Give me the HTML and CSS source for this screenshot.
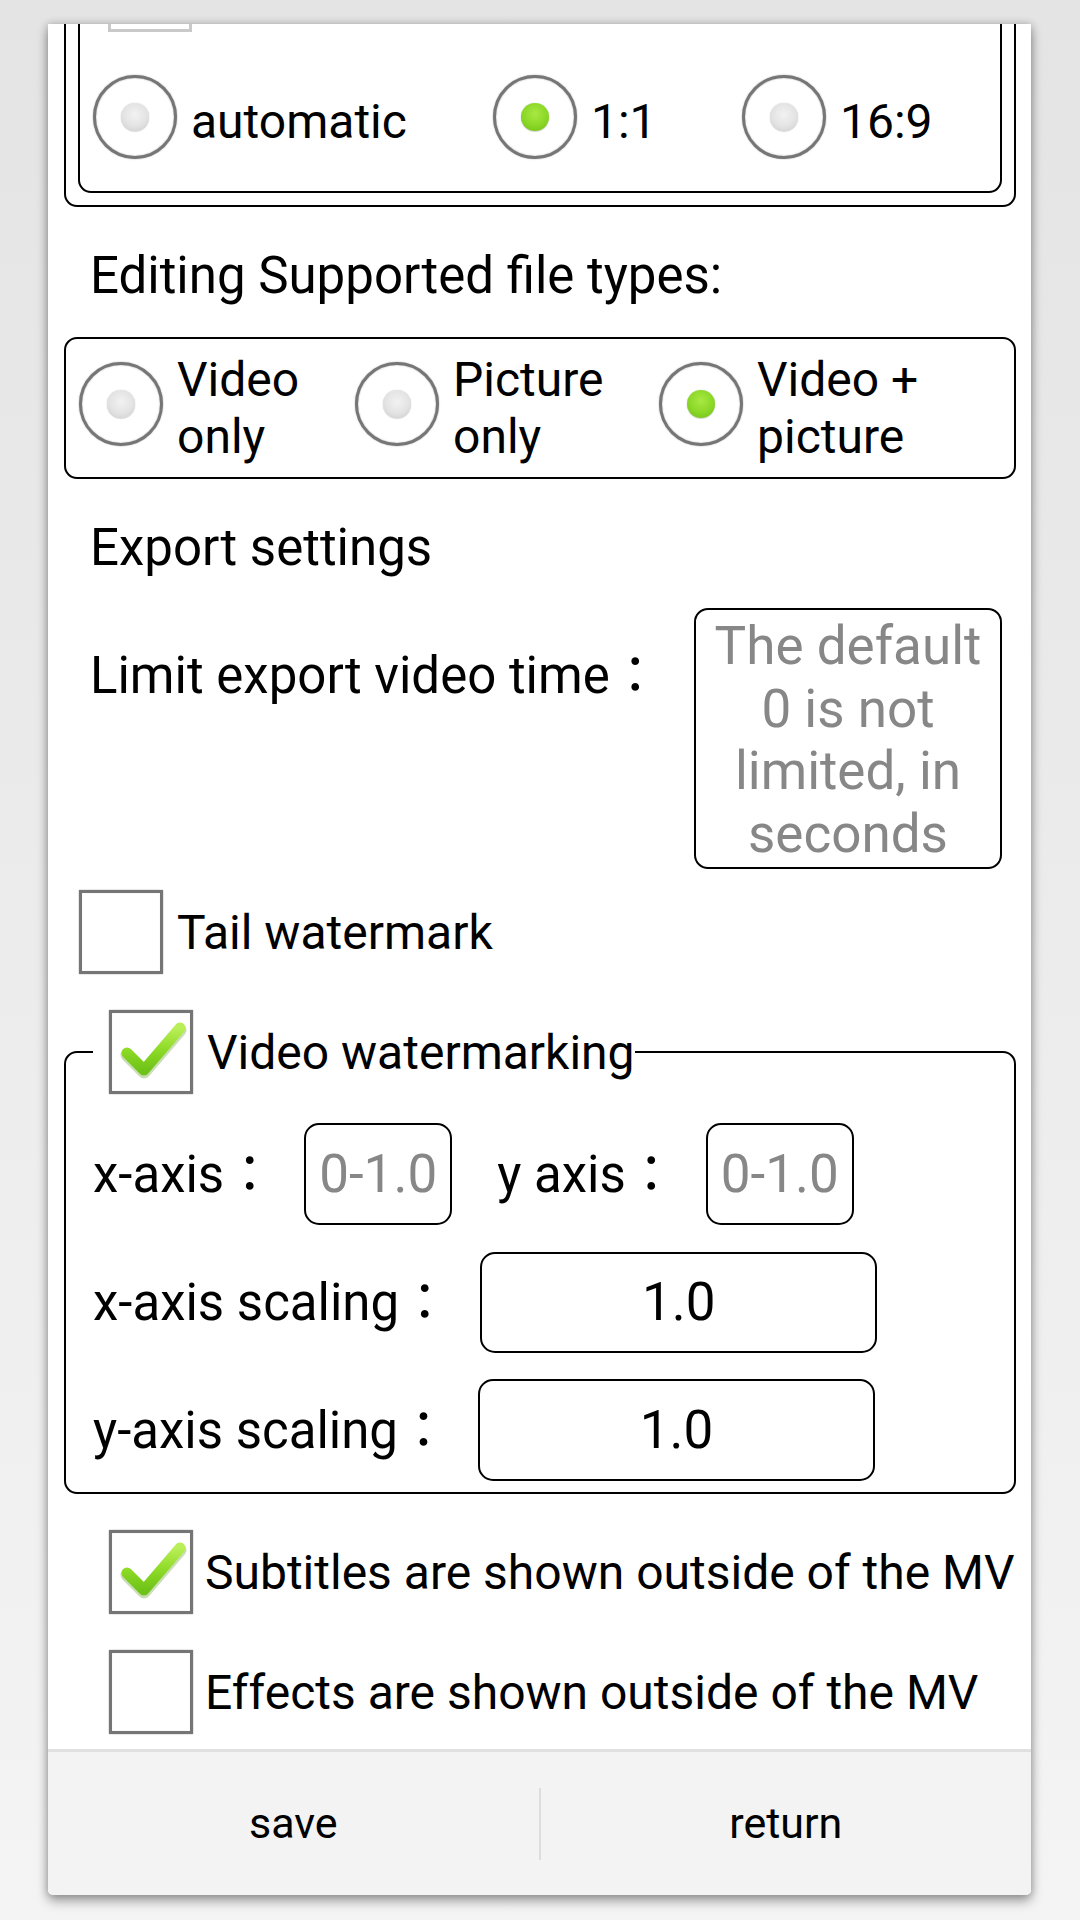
FILE: index.html
```html
<!DOCTYPE html>
<html lang="en">
<head>
<meta charset="utf-8">
<title>Settings</title>
<link rel="stylesheet" href="styles.css">
</head>
<body>
<div class="screen">
  <div class="dialog">
    <div class="scroll">
      <div class="content">

        <div class="ratio-outer">
          <div class="ratio-inner">
            <div class="cut-row"><span class="check check--faint"></span></div>
            <div class="ratio-row">
              <div class="radio-item"><span class="radio"><span class="dot"></span></span><span class="radio-text">automatic</span></div>
              <div class="radio-item"><span class="radio"><span class="dot dot--on"></span></span><span class="radio-text">1:1</span></div>
              <div class="radio-item"><span class="radio"><span class="dot"></span></span><span class="radio-text">16:9</span></div>
            </div>
          </div>
        </div>

        <div class="section-title">Editing Supported file types:</div>

        <div class="types-box">
          <div class="radio-item"><span class="radio"><span class="dot"></span></span><span class="radio-text">Video only</span></div>
          <div class="radio-item"><span class="radio"><span class="dot"></span></span><span class="radio-text">Picture only</span></div>
          <div class="radio-item"><span class="radio"><span class="dot dot--on"></span></span><span class="radio-text">Video + picture</span></div>
        </div>

        <div class="section-title">Export settings</div>

        <div class="limit-row">
          <span class="limit-label">Limit export video time<span class="colon">：</span></span>
          <div class="edit edit--limit">The default 0 is not limited, in seconds</div>
        </div>

        <div class="check-row check-row--tail">
          <span class="check"></span>
          <span class="check-text">Tail watermark</span>
        </div>

        <fieldset class="wm-group">
          <legend class="wm-legend">
            <span class="legend-inner">
              <span class="check">
                <svg class="tick" viewBox="0 0 78 78"><defs><linearGradient id="tg" x1="0" y1="0" x2="0" y2="1"><stop offset="0" stop-color="#b9ef58"/><stop offset="0.5" stop-color="#8fdb27"/><stop offset="1" stop-color="#6fc318"/></linearGradient></defs><polyline points="15,40 32,57 68,15" fill="none" stroke="#4f8f10" stroke-opacity="0.3" stroke-width="13" stroke-linejoin="round" stroke-linecap="round" transform="translate(0 2)"/><polyline points="15,40 32,57 68,15" fill="none" stroke="url(#tg)" stroke-width="11" stroke-linejoin="round" stroke-linecap="round"/></svg>
              </span>
              <span class="legend-text">Video watermarking</span>
            </span>
          </legend>

          <div class="wm-row">
            <span class="wm-label">x-axis<span class="colon">：</span></span>
            <div class="edit edit--pos edit--x">0-1.0</div>
            <span class="wm-label wm-label--y">y axis<span class="colon">：</span></span>
            <div class="edit edit--pos edit--y">0-1.0</div>
          </div>
          <div class="wm-row wm-row--scale">
            <span class="wm-label">x-axis scaling<span class="colon">：</span></span>
            <div class="edit edit--scale">1.0</div>
          </div>
          <div class="wm-row wm-row--scale2">
            <span class="wm-label">y-axis scaling<span class="colon">：</span></span>
            <div class="edit edit--scale edit--scale2">1.0</div>
          </div>
        </fieldset>

        <div class="check-row check-row--indent check-row--first">
          <span class="check">
            <svg class="tick" viewBox="0 0 78 78"><defs><linearGradient id="tg2" x1="0" y1="0" x2="0" y2="1"><stop offset="0" stop-color="#b9ef58"/><stop offset="0.5" stop-color="#8fdb27"/><stop offset="1" stop-color="#6fc318"/></linearGradient></defs><polyline points="15,40 32,57 68,15" fill="none" stroke="#4f8f10" stroke-opacity="0.3" stroke-width="13" stroke-linejoin="round" stroke-linecap="round" transform="translate(0 2)"/><polyline points="15,40 32,57 68,15" fill="none" stroke="url(#tg2)" stroke-width="11" stroke-linejoin="round" stroke-linecap="round"/></svg>
          </span>
          <span class="check-text check-text--wide">Subtitles are shown outside of the MV</span>
        </div>

        <div class="check-row check-row--indent">
          <span class="check"></span>
          <span class="check-text check-text--wide">Effects are shown outside of the MV</span>
        </div>

      </div>
    </div>

    <div class="buttons">
      <div class="btn">save</div>
      <div class="divider"></div>
      <div class="btn">return</div>
    </div>
  </div>
</div>
</body>
</html>
```

FILE: styles.css
```css
* {
  box-sizing: border-box;
}

html,
body {
  margin: 0;
  padding: 0;
}

body {
  width: 1080px;
  height: 1920px;
  overflow: hidden;
  background: linear-gradient(#e4e4e4, #f4f4f4);
  font-family: Roboto, "Noto Sans CJK JP", sans-serif;
  font-size: 48px;
  line-height: 57px;
  color: #000;
}

.screen {
  height: 1920px;
  padding: 24px 49px 0 48px;
}

.dialog {
  height: 1871px;
  background: #fff;
  display: flex;
  flex-direction: column;
  border-radius: 0 0 5px 5px;
  box-shadow: 0 6px 12px rgba(0, 0, 0, 0.35), 0 0 9px rgba(0, 0, 0, 0.22);
  overflow: hidden;
}

.scroll {
  flex: 1;
  overflow: hidden;
  padding: 0 15px 0 16px;
}

.content {
  margin-top: -108px;
}

.colon {
  font-family: "Noto Sans CJK JP", sans-serif;
  line-height: 0;
}

/* ---------- radios ---------- */

.radio-item {
  display: flex;
  align-items: center;
}

.radio {
  flex: none;
  width: 84px;
  height: 84px;
  margin-bottom: 9px;
  border: 3px solid #767676;
  border-radius: 50%;
  box-shadow: 0 0 1.5px rgba(0, 0, 0, 0.45), inset 0 0 1.5px rgba(0, 0, 0, 0.35);
  display: flex;
  align-items: center;
  justify-content: center;
  background: #fff;
}

.dot {
  width: 28px;
  height: 28px;
  border-radius: 50%;
  background: radial-gradient(circle at 50% 42%, #f2f2f2 0%, #e3e3e3 55%, #c9c9c9 100%);
  box-shadow: 0 0 1px rgba(0, 0, 0, 0.3), 0 1px 1px rgba(0, 0, 0, 0.12);
}

.dot--on {
  background: radial-gradient(circle at 50% 38%, #a9e843 0%, #8ad726 55%, #6dbb16 100%);
  box-shadow: 0 0 1px rgba(40, 90, 0, 0.45), 0 1px 1px rgba(0, 0, 0, 0.15);
}

.radio-text {
  margin-left: 14px;
}

/* ---------- checkboxes ---------- */

.check {
  flex: none;
  display: block;
  width: 84px;
  height: 84px;
  border: 3px solid #757575;
  box-shadow: 0 0 1.5px rgba(0, 0, 0, 0.35), inset 0 0 1px rgba(0, 0, 0, 0.2);
  background: #fff;
}

.check--faint {
  border-color: #c9c9c9;
  box-shadow: none;
}

.tick {
  display: block;
  width: 78px;
  height: 78px;
}

.check-row {
  display: flex;
  align-items: center;
}

.check-text {
  margin-left: 14px;
}

.check-text--wide {
  margin-left: 12px;
  white-space: nowrap;
}

.check-row--tail {
  margin-top: 21px;
  padding-left: 15px;
}

.check-row--indent {
  margin-top: 36px;
  padding-left: 45px;
}

/* ---------- top ratio group ---------- */

.ratio-outer {
  border: 2px solid #000;
  border-radius: 13px;
  padding: 12px;
}

.ratio-inner {
  border: 2px solid #000;
  border-radius: 13px;
  padding: 16px 13px 23px;
}

.cut-row {
  height: 84px;
  margin-bottom: 43px;
  padding-left: 15px;
}

.ratio-row {
  display: grid;
  grid-template-columns: 400px 249px 1fr;
}

/* ---------- titles ---------- */

.section-title {
  margin-top: 40px;
  padding-left: 26px;
  font-size: 51px;
}

/* ---------- file types ---------- */

.types-box {
  margin-top: 33px;
  border: 2px solid #000;
  border-radius: 13px;
  padding: 12px 13px;
  display: grid;
  grid-template-columns: 276px 304px 1fr;
}

/* ---------- edit boxes ---------- */

.edit {
  flex: none;
  border: 2px solid #000;
  border-radius: 14px;
  text-align: center;
  background: #fff;
}

.limit-row {
  display: flex;
  align-items: flex-start;
  margin-top: 32px;
}

.limit-label {
  margin-top: 39px;
  padding-left: 26px;
  font-size: 51px;
}

.edit--limit {
  margin-left: auto;
  margin-right: 14px;
  width: 308px;
  padding: 5px 6px 2px;
  font-size: 53px;
  line-height: 62.5px;
  color: #878787;
}

/* ---------- watermark group ---------- */

.wm-group {
  margin: 36px 0 0;
  min-width: 0;
  border: 2px solid #000;
  border-radius: 13px;
  padding: 29px 0 11px 27px;
}

.wm-legend {
  padding: 0 0 0 16px;
}

.legend-inner {
  display: flex;
  align-items: center;
}

.legend-text {
  margin-left: 14px;
}

.wm-row {
  display: flex;
  align-items: center;
}

.wm-label {
  font-size: 51px;
}

.wm-row--scale {
  margin-top: 27px;
}

.wm-row--scale2 {
  margin-top: 26px;
}

.wm-label--y {
  margin-left: 45px;
}

.edit--pos {
  width: 148px;
  height: 102px;
  font-size: 53px;
  line-height: 98px;
  color: #878787;
  border-radius: 15px;
}

.edit--x {
  margin-left: 29px;
}

.edit--y {
  margin-left: 29px;
}

.edit--scale {
  margin-left: 30px;
  width: 397px;
  height: 101px;
  font-size: 53px;
  line-height: 97px;
  border-radius: 15px;
}

.edit--scale2 {
  margin-left: 29px;
  height: 102px;
  line-height: 98px;
}

/* ---------- bottom buttons ---------- */

.buttons {
  flex: none;
  height: 146px;
  display: flex;
  align-items: center;
  border-top: 3px solid #e0e0e0;
  background: #f3f3f3;
  font-size: 43px;
}

.btn {
  flex: 1;
  text-align: center;
}

.divider {
  flex: none;
  width: 2px;
  height: 72px;
  background: #dddddd;
}
```
